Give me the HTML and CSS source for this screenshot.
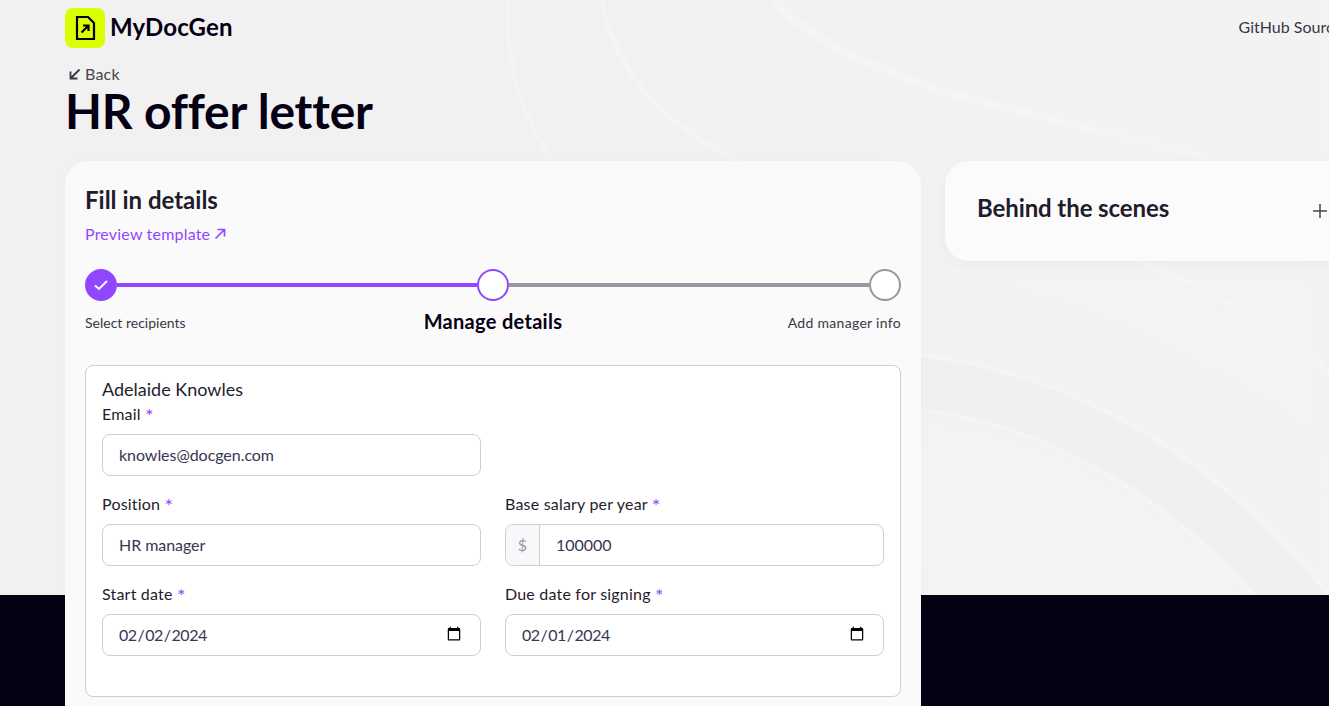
FILE: index.html
```html
<!DOCTYPE html>
<html lang="en">
<head>
<meta charset="utf-8">
<title>MyDocGen - HR offer letter</title>
<link rel="stylesheet" href="styles.css">
</head>
<body>
<main class="hero">
  <svg class="swirl" width="1329" height="595" viewBox="0 0 1329 595" aria-hidden="true">
    <defs>
      <linearGradient id="fade" x1="773" y1="0" x2="1329" y2="0" gradientUnits="userSpaceOnUse">
        <stop offset="0" stop-color="#f6f6f6"/>
        <stop offset="0.35" stop-color="#f6f6f6"/>
        <stop offset="1" stop-color="#f3f3f3"/>
      </linearGradient>
      <filter id="soft"><feGaussianBlur stdDeviation="1.200"/></filter>
      <filter id="mid"><feGaussianBlur stdDeviation="2"/></filter>
      <filter id="softer"><feGaussianBlur stdDeviation="10"/></filter>
    </defs>
    <path class="band-top" d="M921 262L1329 262L1329 470C1210 375 1060 310 921 292Z" filter="url(#softer)"/>
    <path class="band-mid" d="M921 355C1080 375 1220 460 1329 595L1253 595C1170 500 1050 425 921 410Z" filter="url(#mid)"/>
    <path class="band-light" d="M921 425C1050 440 1160 510 1235 595L921 595Z" filter="url(#softer)"/>
    <path class="arc" d="M921 355C1080 375 1220 460 1329 595" filter="url(#soft)"/>
    <path class="arc" d="M921 410C1050 425 1170 500 1253 595" filter="url(#soft)"/>
    <path class="arc" d="M1137 260C1205 285 1270 325 1329 373" filter="url(#soft)"/>
    <path class="arc-faint" d="M508 0C505 60 520 115 555 165" filter="url(#soft)"/>
    <path class="arc" d="M602 0C615 75 665 125 745 165" filter="url(#soft)"/>
    <path class="arc-wide" d="M773 0C810 40 865 65 945 92C1080 130 1210 150 1329 195" filter="url(#mid)"/>
  </svg>

  <div class="page">
    <header class="topbar">
      <a class="brand" href="#">
        <span class="brand-mark">
          <svg width="24" height="28" viewBox="0 0 24 28" fill="none" aria-hidden="true">
            <path class="logo-stroke" d="M4 3H15L21 9V25H4Z"/>
            <path class="logo-stroke" d="M8.500 18.500L15.500 11.500M10 11.500H15.500V17"/>
          </svg>
        </span>
        <span class="brand-name">MyDocGen</span>
      </a>
      <a class="top-link" href="#">GitHub Source Code</a>
    </header>

    <a class="back" href="#">
      <svg class="back-icon" width="12" height="12" viewBox="0 0 12 12" fill="none" aria-hidden="true">
        <path class="back-stroke" d="M10.500 1.500L1.500 10.500M1.500 3.500V10.500H8.500"/>
      </svg>
      <span>Back</span>
    </a>
    <h1 class="title">HR offer letter</h1>

    <div class="columns">
      <section class="card">
        <h2 class="card-title">Fill in details</h2>
        <a class="preview" href="#">Preview template
          <svg class="preview-icon" width="12" height="12" viewBox="0 0 12 12" fill="none" aria-hidden="true">
            <path class="preview-stroke" d="M1.500 10.500L10.500 1.500M3.500 1.500H10.500V8.500"/>
          </svg>
        </a>

        <div class="stepper">
          <span class="dot dot-done">
            <svg width="16" height="12" viewBox="0 0 16 12" fill="none" aria-hidden="true">
              <path class="check" d="M2 6.500L6 10L14 2"/>
            </svg>
          </span>
          <span class="line line-done"></span>
          <span class="dot dot-current"></span>
          <span class="line"></span>
          <span class="dot"></span>
        </div>
        <div class="step-labels">
          <span class="step-label">Select recipients</span>
          <span class="step-label-current">Manage details</span>
          <span class="step-label step-label-end">Add manager info</span>
        </div>

        <form class="person">
          <h3 class="person-name">Adelaide Knowles</h3>
          <div class="fields">
            <div class="field">
              <label class="label" for="email">Email <span class="req">*</span></label>
              <input class="input" id="email" type="text" value="knowles@docgen.com">
            </div>
            <div class="field-spacer"></div>
            <div class="field">
              <label class="label" for="position">Position <span class="req">*</span></label>
              <input class="input" id="position" type="text" value="HR manager">
            </div>
            <div class="field">
              <label class="label" for="salary">Base salary per year <span class="req">*</span></label>
              <div class="input-group">
                <span class="prefix">$</span>
                <input class="input-bare" id="salary" type="text" value="100000">
              </div>
            </div>
            <div class="field">
              <label class="label" for="start">Start date <span class="req">*</span></label>
              <input class="input input-date" id="start" type="date" value="2024-02-02">
            </div>
            <div class="field">
              <label class="label" for="due">Due date for signing <span class="req">*</span></label>
              <input class="input input-date" id="due" type="date" value="2024-02-01">
            </div>
          </div>
        </form>
      </section>

      <aside class="side-card">
        <h2 class="side-title">Behind the scenes</h2>
        <svg class="plus" width="14" height="14" viewBox="0 0 14 14" fill="none" aria-hidden="true">
          <path class="plus-stroke" d="M7 0V14M0 7H14"/>
        </svg>
      </aside>
    </div>
  </div>
</main>
<footer class="footer"></footer>
</body>
</html>
```

FILE: styles.css
```css
* { box-sizing: border-box; }

html, body {
  margin: 0;
  height: 706px;
  overflow: hidden;
}

body {
  display: flex;
  flex-direction: column;
  background: #060014;
  color: #1f1c2c;
  font-family: "Lato", "Liberation Sans", sans-serif;
}

a { color: inherit; text-decoration: none; }

.hero {
  position: relative;
  z-index: 1;
  height: 595px;
  flex: none;
  background: linear-gradient(90deg, #f1f1f1 0%, #f1f1f1 40%, #f3f3f3 100%);
}

.swirl {
  position: absolute;
  top: 0;
  left: 0;
}

.band-top { fill: #f3f3f3; }
.band-mid { fill: #f0f0f0; }
.band-light { fill: #f4f4f4; }

.arc,
.arc-faint,
.arc-wide {
  fill: none;
  stroke: #f6f6f6;
  stroke-width: 3;
}

.arc-faint {
  stroke: #f4f4f4;
  stroke-width: 4;
}

.arc-wide {
  stroke: url(#fade);
  stroke-width: 6;
}

.page {
  position: relative;
  width: 1318px;
  margin-left: 65px;
  padding-top: 8px;
}

.topbar {
  display: flex;
  justify-content: space-between;
  align-items: center;
  height: 40px;
}

.brand {
  display: flex;
  align-items: center;
  gap: 5px;
}

.brand-mark {
  display: flex;
  align-items: center;
  justify-content: center;
  width: 40px;
  height: 40px;
  border-radius: 8px;
  background: #d9ff00;
}

.logo-stroke {
  stroke: #060014;
  stroke-width: 2.200;
}

.brand-name {
  padding-bottom: 4px;
  font-size: 24px;
  font-weight: 700;
  letter-spacing: 0.1px;
  color: #060014;
}

.top-link {
  padding-bottom: 4px;
  font-size: 16px;
  color: #3a3745;
}

.back {
  display: flex;
  align-items: center;
  gap: 4px;
  height: 24px;
  margin-top: 13px;
  padding-left: 4px;
  font-size: 16px;
  letter-spacing: 0.2px;
  color: #47444f;
}

.back-icon { margin-top: 2px; }

.back-stroke {
  stroke: #3a3745;
  stroke-width: 1.800;
}

.title {
  margin: 0;
  height: 76px;
  font-size: 48px;
  line-height: 52px;
  font-weight: 700;
  letter-spacing: -0.2px;
  color: #060014;
}

.columns {
  display: grid;
  grid-template-columns: 856px 414px;
  gap: 24px;
  align-items: start;
}

.card {
  padding: 24px 20px 40px;
  border-radius: 24px;
  background: #fafafa;
  box-shadow: 0 0 16px rgba(0, 0, 0, 0.02);
}

.card-title {
  margin: 0;
  height: 30px;
  font-size: 24px;
  line-height: 30px;
  font-weight: 700;
  color: #1f1c2c;
}

.preview {
  display: flex;
  align-items: center;
  gap: 4px;
  height: 24px;
  margin-top: 6px;
  font-size: 16px;
  letter-spacing: 0.2px;
  color: #9147ff;
}

.preview-icon { margin-top: 2px; }

.preview-stroke {
  stroke: #9147ff;
  stroke-width: 1.700;
}

.stepper {
  display: flex;
  align-items: center;
  margin-top: 24px;
}

.dot {
  display: flex;
  align-items: center;
  justify-content: center;
  flex: none;
  width: 32px;
  height: 32px;
  border-radius: 50%;
  border: 2px solid #98969f;
  background: #ffffff;
}

.dot-done {
  border-color: #9147ff;
  background: #9147ff;
}

.dot-current { border-color: #9147ff; }

.check {
  stroke: #ffffff;
  stroke-width: 2;
}

.line {
  flex: 1;
  height: 4px;
  background: #98969f;
}

.line-done { background: #9147ff; }

.step-labels {
  display: grid;
  grid-template-columns: 1fr auto 1fr;
  align-items: center;
  height: 44px;
}

.step-label {
  padding-bottom: 1px;
  font-size: 14px;
  color: #3a3745;
}

.step-label-end {
  text-align: right;
  letter-spacing: 0.3px;
}

.step-label-current {
  padding-bottom: 5px;
  font-size: 20px;
  font-weight: 700;
  letter-spacing: 0.3px;
  color: #060014;
}

.person {
  height: 332px;
  margin-top: 20px;
  padding: 11px 16px 12px;
  border: 1px solid #cfcfcf;
  border-radius: 8px;
  background: #ffffff;
}

.person-name {
  margin: 0 0 1px;
  font-size: 18px;
  line-height: 24px;
  font-weight: 400;
  color: #1f1c2c;
}

.fields {
  display: grid;
  grid-template-columns: 379px 379px;
  column-gap: 24px;
  row-gap: 16px;
}

.field {
  display: flex;
  flex-direction: column;
  gap: 8px;
}

.label {
  font-size: 16px;
  line-height: 24px;
  letter-spacing: 0.2px;
  color: #1f1c2c;
}

.req {
  font-size: 20px;
  line-height: 0;
  vertical-align: -3px;
  color: #9147ff;
}

.input,
.input-group {
  width: 100%;
  height: 42px;
  border: 1px solid #cfcfcf;
  border-radius: 8px;
  background: #ffffff;
}

.input {
  padding: 0 16px 2px;
}

.input,
.input-bare {
  font-family: inherit;
  font-size: 16px;
  letter-spacing: -0.05px;
  color: #3a3553;
}

.input-date {
  padding-left: 15px;
  letter-spacing: -0.5px;
}

.input-group {
  display: flex;
  overflow: hidden;
}

.prefix {
  display: flex;
  align-items: center;
  justify-content: center;
  flex: none;
  width: 34px;
  padding-bottom: 2px;
  border-right: 1px solid #cfcfcf;
  background: #f7f8fa;
  font-size: 16px;
  color: #9a98a2;
}

.input-bare {
  flex: 1;
  min-width: 0;
  padding: 0 16px 2px;
  border: 0;
  outline: 0;
  background: transparent;
}

.side-card {
  display: flex;
  justify-content: space-between;
  align-items: center;
  height: 100px;
  padding: 0 32px;
  border-radius: 24px;
  background: #fbfbfb;
  box-shadow: 0 4px 16px rgba(0, 0, 0, 0.03);
}

.side-title {
  margin: 0 0 8px;
  font-size: 24px;
  font-weight: 700;
  letter-spacing: -0.1px;
  color: #1f1c2c;
}

.plus-stroke {
  stroke: #47444f;
  stroke-width: 1.500;
}

.footer {
  flex: 1;
  background: #060014;
}
```
